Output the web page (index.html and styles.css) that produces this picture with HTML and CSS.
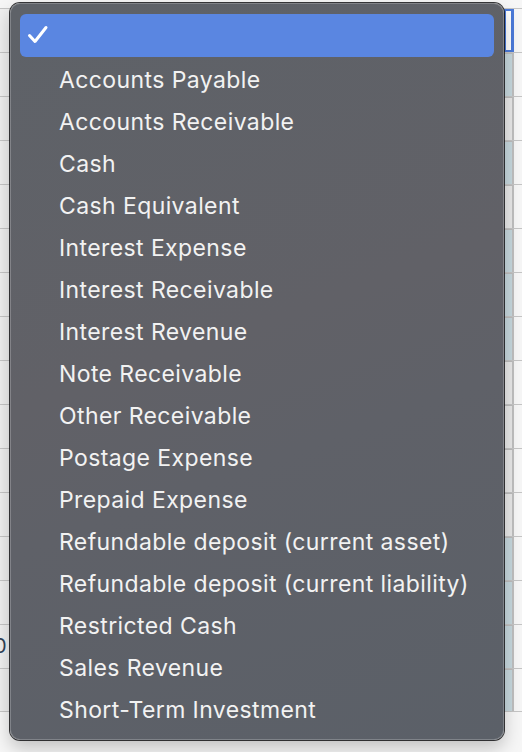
FILE: index.html
```html
<!DOCTYPE html>
<html>
<head>
<meta charset="utf-8">
<link rel="stylesheet" href="styles.css">
</head>
<body>
<div class="sheet">
  <div class="table">
    <div class="row"><div class="c-left"></div><div class="c-right sel"></div></div>
    <div class="row"><div class="c-left"></div><div class="c-right blue"></div></div>
    <div class="row"><div class="c-left"></div><div class="c-right"></div></div>
    <div class="row"><div class="c-left"></div><div class="c-right blue"></div></div>
    <div class="row"><div class="c-left"></div><div class="c-right"></div></div>
    <div class="row"><div class="c-left"></div><div class="c-right blue"></div></div>
    <div class="row"><div class="c-left"></div><div class="c-right blue"></div></div>
    <div class="row"><div class="c-left"></div><div class="c-right blue"></div></div>
    <div class="row"><div class="c-left"></div><div class="c-right"></div></div>
    <div class="row"><div class="c-left"></div><div class="c-right"></div></div>
    <div class="row"><div class="c-left"></div><div class="c-right"></div></div>
    <div class="row"><div class="c-left"></div><div class="c-right"></div></div>
    <div class="row"><div class="c-left"></div><div class="c-right blue"></div></div>
    <div class="row"><div class="c-left"></div><div class="c-right blue"></div></div>
    <div class="row"><div class="c-left"><span class="num">0</span></div><div class="c-right blue"></div></div>
    <div class="row"><div class="c-left"></div><div class="c-right blue"></div></div>
  </div>

  <div class="menu">
    <div class="item active">
      <svg class="check" width="22" height="20" viewBox="0 0 22 20"><polyline points="2.5,10.5 8,16.5 19,2.5" fill="none" stroke="#ffffff" stroke-width="3" stroke-linecap="round" stroke-linejoin="round"/></svg>
    </div>
    <div class="item">Accounts Payable</div>
    <div class="item">Accounts Receivable</div>
    <div class="item">Cash</div>
    <div class="item">Cash Equivalent</div>
    <div class="item">Interest Expense</div>
    <div class="item">Interest Receivable</div>
    <div class="item">Interest Revenue</div>
    <div class="item">Note Receivable</div>
    <div class="item">Other Receivable</div>
    <div class="item">Postage Expense</div>
    <div class="item">Prepaid Expense</div>
    <div class="item">Refundable deposit (current asset)</div>
    <div class="item">Refundable deposit (current liability)</div>
    <div class="item">Restricted Cash</div>
    <div class="item">Sales Revenue</div>
    <div class="item">Short-Term Investment</div>
  </div>
</div>
</body>
</html>
```

FILE: styles.css
```css
html, body {
  margin: 0;
  padding: 0;
}
body {
  width: 522px;
  height: 752px;
  overflow: hidden;
  background: #f6f6f6;
  font-family: Inter, "Liberation Sans", sans-serif;
}
.sheet {
  position: relative;
  width: 522px;
  height: 752px;
}
.table {
  padding-top: 8px;
  display: flex;
  flex-direction: column;
}
.row {
  display: flex;
  height: 44px;
  box-sizing: border-box;
  border-top: 1px solid #c5c5c5;
}
.row:last-child {
  border-bottom: 1px solid #c5c5c5;
}
.c-left {
  width: 504px;
  background: linear-gradient(90deg, #efefef, #e6e6e6);
  position: relative;
  overflow: hidden;
}
.num {
  position: absolute;
  left: -6px;
  top: 9px;
  font-size: 20px;
  color: #2f4156;
}
.c-right {
  width: 10px;
  background: #e9e9e9;
  border-right: 2px solid #bfbfbf;
  border-top: 1px solid #bdbdbd;
  box-sizing: border-box;
}
.c-right.blue {
  background: #c7d8de;
}
.c-right.sel {
  background: #ffffff;
  border: 2px solid #4b7ad9;
  border-right-width: 3px;
}
.menu {
  position: absolute;
  left: 10px;
  top: 3px;
  width: 494px;
  height: 737px;
  box-sizing: border-box;
  padding: 12px 10px 11px 10px;
  border-radius: 10px;
  background: linear-gradient(160deg, #5e6268 0%, #616167 45%, #5f6168 60%, #5b6068 100%);
  box-shadow: 0 0 0 1px rgba(20, 20, 22, 0.85), inset 0 0 0 1px rgba(255, 255, 255, 0.22), 0 8px 18px rgba(0, 0, 0, 0.22);
  display: flex;
  flex-direction: column;
}
.item {
  height: 42px;
  flex: 0 0 42px;
  display: flex;
  align-items: center;
  padding-left: 39px;
  padding-top: 3px;
  box-sizing: border-box;
  font-size: 23px;
  letter-spacing: 0.4px;
  color: #f2f2f2;
  white-space: nowrap;
  border-radius: 6px;
}
.item.active {
  background: #5a86e1;
  height: 43px;
  flex-basis: 43px;
  margin-top: -1px;
  padding-top: 0;
  padding-left: 7px;
}
.check {
  display: block;
  margin-top: -1px;
}
```
